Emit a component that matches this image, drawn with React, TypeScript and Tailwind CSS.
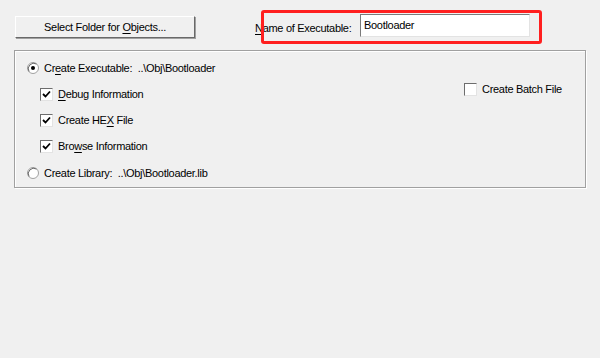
import React from "react";

const font = { fontFamily: '"Liberation Sans", Arial, sans-serif' };

const U = ({ children }: { children: React.ReactNode }) => <span className="underline underline-offset-2">{children}</span>;

const Check = ({ checked }: { checked?: boolean }) => (
  <span className="w-[13px] h-[13px] bg-white border border-t-[#6d6d6d] border-l-[#6d6d6d] border-r-[#e3e3e3] border-b-[#e3e3e3] flex items-center justify-center shrink-0">
    {checked && (
      <svg width="9" height="9" viewBox="0 0 9 9">
        <path d="M1 4 L3.5 6.5 L8 1.5" stroke="#000" strokeWidth="1.8" fill="none" />
      </svg>
    )}
  </span>
);

const Radio = ({ checked }: { checked?: boolean }) => (
  <svg width="12" height="12" viewBox="0 0 12 12" className="shrink-0">
    <circle cx="6" cy="6" r="5.5" fill="#fff" stroke="#a0a0a0" />
    <path d="M2 9.5 A5.5 5.5 0 0 1 9.5 2" stroke="#6d6d6d" fill="none" />
    {checked && <circle cx="6" cy="6" r="2" fill="#000" />}
  </svg>
);

export default function App() {
  return (
    <div className="relative w-[600px] h-[358px] bg-[#f0f0f0] text-[11px] tracking-[-0.3px] text-black overflow-hidden" style={font}>
      <div className="flex items-start pt-[14px]">
        <button className="ml-[15px] mt-[2px] w-[180px] h-[22px] bg-[#f0f0f0] border border-t-white border-l-white border-r-[#696969] border-b-[#696969] shadow-[1px_1px_0_#a0a0a0] flex items-center justify-center">
          <span>Select Folder for <U>O</U>bjects...</span>
        </button>
        <div className="ml-[60px] mt-[6px] w-[99px]"><U>N</U>ame of Executable:</div>
        <div className="ml-[6px] w-[170px] h-[23px] bg-white border border-t-[#7a7a7a] border-l-[#7a7a7a] border-r-[#e3e3e3] border-b-[#e3e3e3] px-[3px] leading-[20px]">
          Bootloader
        </div>
      </div>

      <div className="absolute left-[261px] top-[10px] w-[281px] h-[34px] border-[3px] border-[#ff1f1f] rounded-[3px]" />

      <div className="ml-[14px] mt-[12px] w-[572px] h-[138px] border border-[#a0a0a0] shadow-[inset_1px_1px_0_#fff,1px_1px_0_#fff] relative">
        <div className="flex flex-col pl-[12px] pt-[10px]">
          <div className="flex items-center h-[14px] gap-[5px]">
            <Radio checked />
            <span>Cr<U>e</U>ate Executable:&nbsp; ..\Obj\Bootloader</span>
          </div>
          <div className="flex flex-col pl-[13px] pt-[12px] gap-[12px]">
            <div className="flex items-center h-[14px] gap-[5px]"><Check checked /><span><U>D</U>ebug Information</span></div>
            <div className="flex items-center h-[14px] gap-[5px]"><Check checked /><span>Create HE<U>X</U> File</span></div>
            <div className="flex items-center h-[14px] gap-[5px]"><Check checked /><span>Bro<U>w</U>se Information</span></div>
          </div>
          <div className="flex items-center h-[14px] gap-[5px] mt-[13px]">
            <Radio />
            <span>Create Library:&nbsp; ..\Obj\Bootloader.lib</span>
          </div>
        </div>
        <div className="absolute left-[449px] top-[30px] flex items-center gap-[5px]">
          <Check />
          <span>Create Batch File</span>
        </div>
      </div>
    </div>
  );
}
